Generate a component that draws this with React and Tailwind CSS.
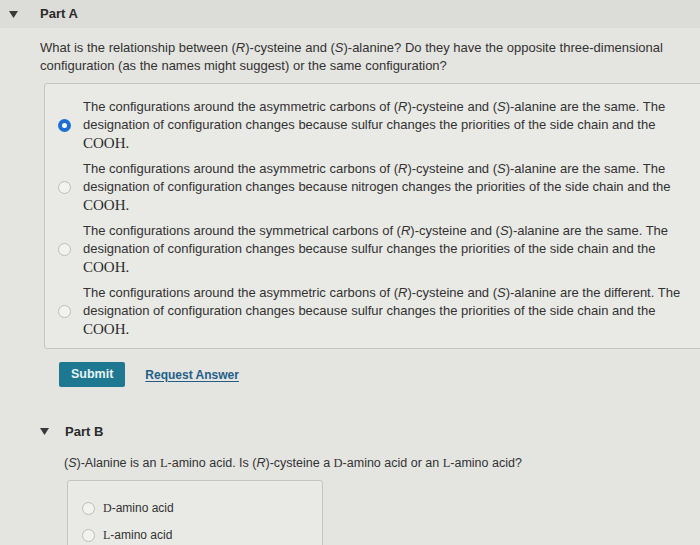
import { useState } from 'react';

const sans = { fontFamily: '"Liberation Sans", Arial, sans-serif' };
const serif = { fontFamily: '"Liberation Serif", "Times New Roman", serif' };

function Radio({ checked }) {
  if (checked) {
    return (
      <span className="flex h-[13px] w-[13px] shrink-0 items-center justify-center rounded-full bg-[#1c6fd1]">
        <span className="h-[5px] w-[5px] rounded-full bg-white" />
      </span>
    );
  }
  return <span className="block h-[13px] w-[13px] shrink-0 rounded-full border border-[#bdbdb9] bg-[#f2f2ef]" />;
}

function Triangle() {
  return (
    <svg width="9" height="7" viewBox="0 0 9 7" className="fill-[#3a3a3a]">
      <path d="M0 0 H9 L4.5 7 Z" />
    </svg>
  );
}

function I({ children }) {
  return <i>{children}</i>;
}

const options = [
  {
    l1: <>The configurations around the asymmetric carbons of (<I>R</I>)-cysteine and (<I>S</I>)-alanine are the same. The</>,
    l2: <>designation of configuration changes because sulfur changes the priorities of the side chain and the</>,
  },
  {
    l1: <>The configurations around the asymmetric carbons of (<I>R</I>)-cysteine and (<I>S</I>)-alanine are the same. The</>,
    l2: <>designation of configuration changes because nitrogen changes the priorities of the side chain and the</>,
  },
  {
    l1: <>The configurations around the symmetrical carbons of (<I>R</I>)-cysteine and (<I>S</I>)-alanine are the same. The</>,
    l2: <>designation of configuration changes because sulfur changes the priorities of the side chain and the</>,
  },
  {
    l1: <>The configurations around the asymmetric carbons of (<I>R</I>)-cysteine and (<I>S</I>)-alanine are the different. The</>,
    l2: <>designation of configuration changes because sulfur changes the priorities of the side chain and the</>,
  },
];

export default function App() {
  const [selected, setSelected] = useState(0);
  const [partB, setPartB] = useState(null);

  return (
    <div className="h-[545px] w-[700px] overflow-hidden bg-[#e4e4e0] text-[#333]" style={sans}>
      {/* Part A header */}
      <div className="flex h-[28px] items-center gap-[22px] bg-[#dcdcd8] pl-[9px]">
        <Triangle />
        <span className="text-[13px] font-bold text-[#2b2b2b]">Part A</span>
      </div>

      <div className="pl-[40px] pt-[11px] text-[13px] leading-[18px]">
        <p className="whitespace-nowrap">
          What is the relationship between (<I>R</I>)-cysteine and (<I>S</I>)-alanine? Do they have the opposite three-dimensional
        </p>
        <p className="whitespace-nowrap">configuration (as the names might suggest) or the same configuration?</p>
      </div>

      {/* Part A answers */}
      <div className="ml-[44px] mt-[8px] w-[680px] rounded-[3px] border border-[#c4c4c0] bg-[#e9e9e5] pb-[2px] pt-[14px]">
        {options.map((o, i) => (
          <label
            key={i}
            className="flex cursor-pointer items-center gap-[12px] pl-[13px] pb-[8px] text-[13px] leading-[18px]"
            onClick={() => setSelected(i)}
          >
            <Radio checked={selected === i} />
            <span className="block">
              <span className="block whitespace-nowrap">{o.l1}</span>
              <span className="block whitespace-nowrap">{o.l2}</span>
              <span className="block text-[15px] leading-[18px] text-[#2b2b2b]" style={serif}>
                COOH.
              </span>
            </span>
          </label>
        ))}
      </div>

      {/* Actions */}
      <div className="ml-[59px] mt-[13px] flex items-center gap-[20px]">
        <button className="h-[25px] rounded-[2px] bg-[#1e7892] px-[12px] text-[12.5px] font-bold text-[#e8f2f4]">
          Submit
        </button>
        <a href="#" className="text-[12px] font-bold text-[#1f5f8a] underline underline-offset-2">
          Request Answer
        </a>
      </div>

      {/* Part B */}
      <div className="mt-[35px] flex items-center gap-[16px] pl-[40px]">
        <Triangle />
        <span className="text-[13px] font-bold text-[#2b2b2b]">Part B</span>
      </div>

      <p className="mt-[12px] whitespace-nowrap pl-[64px] text-[12.5px] leading-[18px]">
        (<I>S</I>)-Alanine is an <span style={serif}>L</span>-amino acid. Is (<I>R</I>)-cysteine a{' '}
        <span style={serif}>D</span>-amino acid or an <span style={serif}>L</span>-amino acid?
      </p>

      <div className="ml-[67px] mt-[8px] w-[256px] rounded-[3px] border border-[#c4c4c0] bg-[#e9e9e5] pt-[19px] pb-[10px]">
        {['D', 'L'].map((k) => (
          <label
            key={k}
            className="flex cursor-pointer items-center gap-[8px] pl-[14px] pb-[10px] text-[12px] leading-[17px]"
            onClick={() => setPartB(k)}
          >
            <Radio checked={partB === k} />
            <span>
              <span style={serif}>{k}</span>-amino acid
            </span>
          </label>
        ))}
      </div>
    </div>
  );
}
